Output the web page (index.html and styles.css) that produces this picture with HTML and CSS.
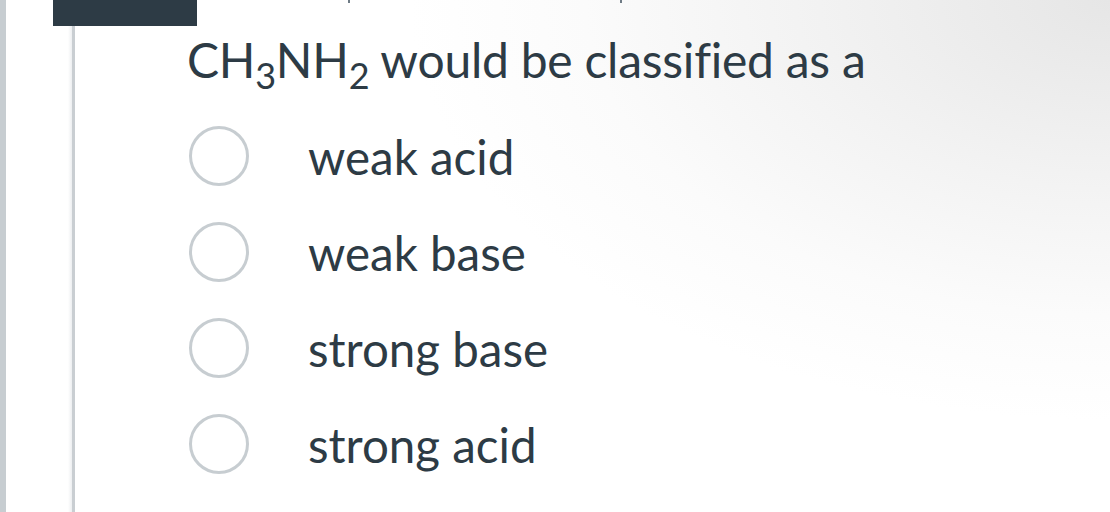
FILE: index.html
```html
<!DOCTYPE html>
<html lang="en">
<head>
<meta charset="utf-8">
<title>Quiz question</title>
<link rel="stylesheet" href="styles.css">
</head>
<body>
<div class="frame">
  <div class="edge"></div>
  <div class="main">
    <div class="topbar">
      <div class="tab"></div>
      <div class="tick tick-a"></div>
      <div class="tick tick-b"></div>
    </div>
    <div class="body-row">
      <div class="gutter"></div>
      <div class="content">
        <div class="question">CH<sub>3</sub>NH<sub>2</sub> would be classified as a</div>
        <ul class="answers">
          <li class="answer"><span class="radio"></span><span class="label">weak acid</span></li>
          <li class="answer"><span class="radio"></span><span class="label">weak base</span></li>
          <li class="answer"><span class="radio"></span><span class="label">strong base</span></li>
          <li class="answer"><span class="radio"></span><span class="label">strong acid</span></li>
        </ul>
      </div>
    </div>
  </div>
</div>
</body>
</html>
```
FILE: styles.css
```css
html, body {
  margin: 0;
  padding: 0;
  height: 100%;
}
body {
  font-family: Lato, "Open Sans", sans-serif;
  color: #2d3b45;
  background: radial-gradient(ellipse 700px 420px at 1110px 0px, #e6e6e6 0%, #f3f3f3 45%, #fbfbfb 75%, #ffffff 100%);
  overflow: hidden;
}
.frame {
  display: flex;
  height: 512px;
}
.edge {
  width: 6px;
  background: #c7cdd1;
  flex: none;
}
.main {
  flex: 1;
  display: flex;
  flex-direction: column;
}
.topbar {
  height: 26px;
  display: flex;
  align-items: flex-start;
  flex: none;
}
.tab {
  margin-left: 47px;
  width: 144px;
  height: 26px;
  background: #2d3b45;
}
.tick {
  width: 2px;
  height: 3px;
  background: #6f7b85;
}
.tick-a { margin-left: 151px; }
.tick-b { margin-left: 270px; }
.body-row {
  flex: 1;
  display: flex;
}
.gutter {
  width: 66px;
  flex: none;
  background: linear-gradient(to right, rgba(255,255,255,0) 0, rgba(255,255,255,0) 62px, #eceef0 66px);
}
.content {
  flex: 1;
  border-left: 3px solid #c9ced2;
  padding-left: 112px;
}
.question {
  font-size: 48px;
  line-height: 1;
  margin-top: 10px;
  letter-spacing: -0.25px;
}
.question sub {
  font-size: 0.75em;
  vertical-align: -0.3em;
  line-height: 0;
}
.answers {
  list-style: none;
  margin: 24px 0 0;
  padding: 0;
}
.answer {
  display: flex;
  align-items: center;
  height: 96px;
}
.radio {
  width: 54px;
  height: 54px;
  border: 3px solid #c7cdd1;
  border-radius: 50%;
  margin-left: 2px;
  flex: none;
  background: #fff;
}
.label {
  font-size: 47.5px;
  margin-left: 59px;
}
```
